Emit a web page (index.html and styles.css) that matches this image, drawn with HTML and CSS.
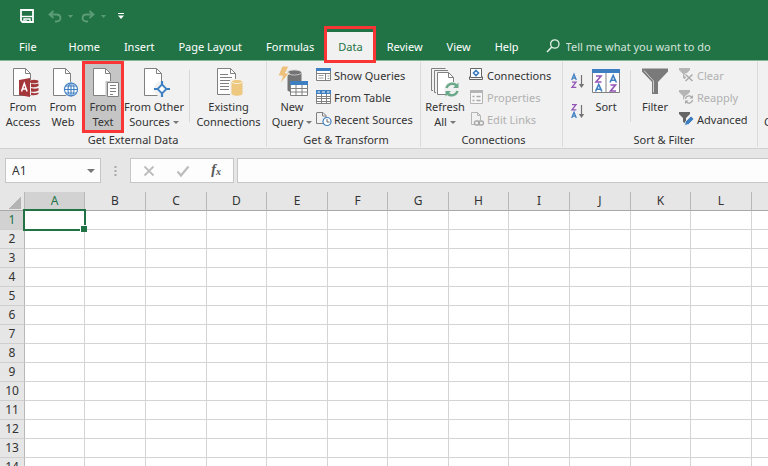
FILE: index.html
```html
<!DOCTYPE html>
<html lang="en">
<head>
  <meta charset="UTF-8">
  <title>Excel - Data</title>
  <link rel="stylesheet" href="styles.css">
</head>
<body>
  <header class="titlebar">
    <button class="quick save" aria-label="Save">
      <svg width="14" height="14" viewBox="0 0 14 14"><path d="M1 1h12v12H2.500L1 11.500z" fill="none" stroke="#fff" stroke-width="1.800"/><path d="M1 7.500h12" stroke="#fff" stroke-width="1.400"/><path d="M4 13V10h6v3M6 11v2" fill="none" stroke="#fff" stroke-width="1.400"/></svg>
    </button>
    <button class="quick undo" aria-label="Undo" disabled>
      <svg width="14" height="13" viewBox="0 0 14 13"><path d="M5.500 1L1.500 4.500l4 3.500M2 4.500h6.500c5 0 5.500 7 0 7H7" fill="none" stroke="#5c9c76" stroke-width="1.800"/></svg>
      <svg class="caret" width="5" height="3" viewBox="0 0 5 3"><path d="M0 0h5L2.500 3z" fill="#5c9c76"/></svg>
    </button>
    <button class="quick redo" aria-label="Redo" disabled>
      <svg width="14" height="13" viewBox="0 0 14 13"><path d="M8.500 1l4 3.500-4 3.500M12 4.500H5.500c-5 0-5.500 7 0 7H7" fill="none" stroke="#5c9c76" stroke-width="1.800"/></svg>
      <svg class="caret" width="5" height="3" viewBox="0 0 5 3"><path d="M0 0h5L2.500 3z" fill="#5c9c76"/></svg>
    </button>
    <button class="quick" aria-label="Customize Quick Access Toolbar">
      <svg width="6" height="6" viewBox="0 0 6 6"><path d="M0 0h6v1H0zM0 2.500h6L3 6z" fill="#fff"/></svg>
    </button>
  </header>

  <nav class="tabs">
    <button class="tab file">File</button>
    <button class="tab">Home</button>
    <button class="tab">Insert</button>
    <button class="tab">Page Layout</button>
    <button class="tab">Formulas</button>
    <button class="tab active">Data</button>
    <button class="tab">Review</button>
    <button class="tab">View</button>
    <button class="tab">Help</button>
    <label class="tell-me">
      <svg width="14" height="14" viewBox="0 0 14 14"><circle cx="8.800" cy="5" r="4.200" fill="none" stroke="#e3efe7" stroke-width="1.300"/><path d="M5.800 8L1 13" stroke="#e3efe7" stroke-width="1.600"/></svg>
      <input type="text" placeholder="Tell me what you want to do">
    </label>
  </nav>

  <main class="ribbon">
    <section class="group external">
      <div class="tools">
        <button class="big">
          <svg width="32" height="30" viewBox="0 0 32 30"><path d="M6.500.500h12l5 5v22h-17z" fill="#fff" stroke="#808080"/><path d="M18.500.500v5h5" fill="none" stroke="#808080"/><path d="M21 12h9v15h-9z" fill="#f1f1f1"/><g fill="#a4373a"><path d="M12 12l11-2v19l-11-2z"/><ellipse cx="27" cy="13.500" rx="4.500" ry="1.800"/><path d="M24 15.500q4 1.500 7.500 0v2.500q-3.500 2-7.500 1zM24 20q4 1.500 7.500 0v2.500q-3.500 2-7.500 1zM24 24.500q4 1.500 7.500 0v1.500q-3.500 2-7.500 1z"/></g><path d="M14.500 23.500l2.800-8 2.800 8M15.500 21h3.600" fill="none" stroke="#fff" stroke-width="1.500"/></svg>
          <span>From<br>Access</span>
        </button>
        <button class="big">
          <svg width="32" height="30" viewBox="0 0 32 30"><path d="M6.500.500h12l5 5v22h-17z" fill="#fff" stroke="#808080"/><path d="M18.500.500v5h5" fill="none" stroke="#808080"/><circle cx="24" cy="21.500" r="7.800" fill="#f1f1f1"/><g fill="#fff" stroke="#3e7fc1" stroke-width="1.100"><circle cx="24" cy="21.500" r="6.500"/><ellipse cx="24" cy="21.500" rx="3" ry="6.500"/><path d="M24 15v13M17.500 21.500h13M18.500 18h11M18.500 25h11"/></g></svg>
          <span>From<br>Web</span>
        </button>
        <button class="big marked">
          <svg width="32" height="30" viewBox="0 0 32 30"><path d="M6.500.500h12l5 5v22h-17z" fill="#fff" stroke="#808080"/><path d="M18.500.500v5h5" fill="none" stroke="#808080"/><path d="M18.500 13h12v16h-12z" fill="#c5c5c5"/><path d="M20.500 14.500h11v14h-11z" fill="#fff" stroke="#808080"/><path d="M23 17.500h6M23 20.500h6M23 23.500h6M23 26.500h3" stroke="#808080"/></svg>
          <span>From<br>Text</span>
        </button>
        <button class="big other">
          <svg width="32" height="30" viewBox="0 0 32 30"><path d="M6.500.500h12l5 5v22h-17z" fill="#fff" stroke="#808080"/><path d="M18.500.500v5h5" fill="none" stroke="#808080"/><circle cx="24" cy="21" r="8" fill="#f1f1f1"/><path d="M24 16.500l4.500 4.500-4.500 4.500-4.500-4.500z" fill="#fff" stroke="#3e7fc1" stroke-width="1.800"/><path d="M24 13v3.500M24 25.500V29M16 21h3.500M28.500 21H32" stroke="#3e7fc1" stroke-width="2.200"/></svg>
          <span>From Other<br>Sources <i class="arrow"></i></span>
        </button>
        <div class="divider"></div>
        <button class="big existing">
          <svg width="32" height="30" viewBox="0 0 32 30"><path d="M4.500.500h13l5 5v21h-18z" fill="#fff" stroke="#808080"/><path d="M17.500.500v5h5" fill="none" stroke="#808080"/><path d="M7 6.500h8M7 9.500h12M7 12.500h11M7 15.500h9M7 18.500h9M7 21.500h9" stroke="#808080"/><path d="M17 11h13v16H17z" fill="#f1f1f1"/><path d="M18.500 13.500v12c0 3 11 3 11 0v-12z" fill="#edc87e"/><ellipse cx="24" cy="13.500" rx="5.500" ry="2" fill="#edc87e" stroke="#fff" stroke-width=".7"/></svg>
          <span>Existing<br>Connections</span>
        </button>
      </div>
      <h2>Get External Data</h2>
    </section>

    <section class="group transform">
      <div class="tools">
        <button class="big">
          <svg width="32" height="30" viewBox="0 0 32 30"><path d="M11.500 5v17c0 3 14 3 14 0V5z" fill="#737373"/><ellipse cx="18.500" cy="4.500" rx="7" ry="2.500" fill="#737373" stroke="#d8d8d8" stroke-width=".8"/><path d="M6-2h7L9.500 5h4L4 16l2.500-8H2z" fill="#edc07b" stroke="#f1f1f1"/><path d="M14.500 14.500h17v13h-17z" fill="#fff" stroke="#808080"/><path d="M14 13h18v4H14z" fill="#3e7fc1"/><path d="M15 20.500h16M15 24h16M20 17v10M26 17v10" stroke="#808080"/></svg>
          <span>New<br>Query <i class="arrow"></i></span>
        </button>
        <div class="list">
          <button class="small">
            <svg width="16" height="16" viewBox="0 0 16 16"><path d="M.500 2.500h14v11H.500z" fill="#fff" stroke="#808080"/><path d="M0 1h15v3H0z" fill="#3e7fc1"/><path d="M1 6.500h14M9.500 7v6" stroke="#808080"/><path d="M2.500 8.500h5M2.500 11h5M11.500 9h2M11.500 11.500h2" stroke="#a0a0a0"/></svg>
            Show Queries
          </button>
          <button class="small">
            <svg width="16" height="16" viewBox="0 0 16 16"><path d="M.500 1.500h14v13H.500z" fill="#fff" stroke="#808080"/><path d="M0 1h15v4H0z" fill="#3e7fc1"/><path d="M1.500 3h2.500M6 3h3M11 3h2.500" stroke="#fff"/><path d="M1 7.500h13M1 9.500h13M1 12.500h13M5.500 5v9M10.500 5v9" stroke="#808080"/></svg>
            From Table
          </button>
          <button class="small">
            <svg width="16" height="16" viewBox="0 0 16 16"><path d="M1 1.500h6l3 3V8M7 12.500H.500v-11M6.500 1.500v3.500H10" fill="none" stroke="#808080"/><circle cx="11" cy="10.500" r="4" fill="#fff" stroke="#3e7fc1" stroke-width="1.200"/><path d="M11 8v3h2.500" fill="none" stroke="#666"/></svg>
            Recent Sources
          </button>
        </div>
      </div>
      <h2>Get &amp; Transform</h2>
    </section>

    <section class="group connections">
      <div class="tools">
        <button class="big">
          <svg width="32" height="30" viewBox="0 0 32 30"><path d="M4 22.500H2.500V.500h14M7 24.500H5.500v-22H19" fill="none" stroke="#808080"/><path d="M8.500 4.500h11l5 5v17h-16z" fill="#fff" stroke="#808080"/><path d="M19.500 4.500v5h5" fill="none" stroke="#808080"/><circle cx="23" cy="21.500" r="7.800" fill="#f1f1f1"/><path d="M17.500 20a6 6 0 0 1 10-2.500M28.500 23a6 6 0 0 1-10 2.500" fill="none" stroke="#6aa98a" stroke-width="2.500"/><path d="M24 20h5.500v-5.500zM22 23h-5.500v5.500z" fill="#6aa98a"/></svg>
          <span>Refresh<br>All <i class="arrow"></i></span>
        </button>
        <div class="list">
          <button class="small">
            <svg width="16" height="16" viewBox="0 0 16 16"><path d="M.500 12.500v-3M.500 12.500h13M13.500 12.500v-3M1.500 10.500v-9h11v9z" fill="#fff" stroke="#666"/><path d="M7 3.500L9.500 6 7 8.500 4.500 6z" fill="#fff" stroke="#3e7fc1" stroke-width="1.600"/></svg>
            Connections
          </button>
          <button class="small" disabled>
            <svg width="16" height="16" viewBox="0 0 16 16"><path d="M1.500 2.500h12v12h-12z" fill="#f7f7f7" stroke="#b5b5b5"/><path d="M1 1h13v3H1z" fill="#b5b5b5"/><path d="M3.500 7.500h2M7.500 7.500h4M3.500 11.500h2M7.500 11.500h4" stroke="#a8a8a8" stroke-width="1.500"/></svg>
            Properties
          </button>
          <button class="small" disabled>
            <svg width="16" height="16" viewBox="0 0 16 16"><path d="M6 13.500H2.500v-12h6l3 3V9M8.500 1.500v3h3" fill="none" stroke="#b5b5b5"/><rect x="5.500" y="10" width="5" height="4" rx="2" fill="none" stroke="#a8a8a8" stroke-width="1.300"/><rect x="9.500" y="10" width="5" height="4" rx="2" fill="none" stroke="#a8a8a8" stroke-width="1.300"/></svg>
            Edit Links
          </button>
        </div>
      </div>
      <h2>Connections</h2>
    </section>

    <section class="group sorting">
      <div class="tools">
        <div class="sort-pair">
          <button class="order" aria-label="Sort A to Z">
            <svg width="14" height="16" viewBox="0 0 14 16"><path d="M.700 7L3 1.300 5.300 7M1.500 5.200h3" fill="none" stroke="#3e7fc1" stroke-width="1.300"/><path d="M1 9.200h4L1 14.400h4.300" fill="none" stroke="#9254b5" stroke-width="1.300"/><path d="M10.500 2v11" stroke="#737373" stroke-width="1.200"/><path d="M7.800 11h5.400l-2.700 4z" fill="#737373"/></svg>
          </button>
          <button class="order" aria-label="Sort Z to A">
            <svg width="14" height="16" viewBox="0 0 14 16"><path d="M1 1.600h4L1 6.800h4.300" fill="none" stroke="#9254b5" stroke-width="1.300"/><path d="M.700 15L3 9.300 5.300 15M1.500 13.200h3" fill="none" stroke="#3e7fc1" stroke-width="1.300"/><path d="M10.500 2v11" stroke="#737373" stroke-width="1.200"/><path d="M7.800 11h5.400l-2.700 4z" fill="#737373"/></svg>
          </button>
        </div>
        <button class="big">
          <svg width="32" height="30" viewBox="0 0 32 30"><path d="M2.500 2.500h27v22h-27zM16 3v21" fill="#fff" stroke="#808080"/><path d="M2 1h28v4H2z" fill="#3e7fc1"/><path d="M6 8h5l-5 6h5.500M20.500 17h5l-5 6H26" fill="none" stroke="#9254b5" stroke-width="1.600"/><path d="M5.500 23.500l3.200-7 3.200 7M6.500 21.300h4.500M20 14.500l3.200-7 3.200 7M21 12.300h4.500" fill="none" stroke="#3e7fc1" stroke-width="1.600"/></svg>
          <span>Sort</span>
        </button>
        <div class="divider"></div>
        <button class="big">
          <svg width="32" height="30" viewBox="0 0 32 30"><path d="M3 .5h26v3L19 14v12h-6V14L3 3.500z" fill="#7a7a7a"/><path d="M5 2.500L14.500 13v11.500" fill="none" stroke="#d0d0d0"/></svg>
          <span>Filter</span>
        </button>
        <div class="list">
          <button class="small" disabled>
            <svg width="16" height="16" viewBox="0 0 16 16"><path d="M0 1h11v2L7 7v6L4 11V7L0 3z" fill="#b5b5b5"/><path d="M6 7l7.500 7M13.500 7L6 14" stroke="#f1f1f1" stroke-width="3.200"/><path d="M6.500 7.500l7 6.500M13.500 7.500l-7 6.500" stroke="#a8a8a8" stroke-width="1.400"/></svg>
            Clear
          </button>
          <button class="small" disabled>
            <svg width="16" height="16" viewBox="0 0 16 16"><path d="M0 1h11v2L7 7v5L4 10V7L0 3z" fill="#b5b5b5"/><circle cx="10" cy="10.500" r="5" fill="#f1f1f1"/><path d="M6.500 10a3.500 3.500 0 0 1 6-2M13.500 11a3.500 3.500 0 0 1-6 2" fill="none" stroke="#a8a8a8" stroke-width="1.400"/><path d="M10.500 9.500H14V6zM9.500 11.500H6V15z" fill="#a8a8a8"/></svg>
            Reapply
          </button>
          <button class="small">
            <svg width="16" height="16" viewBox="0 0 16 16"><path d="M0 1h11v2L7 7v6L4 11V7L0 3z" fill="#666"/><path d="M5.500 14.500l1-4L12 5l3 3-5.500 5.500z" fill="#3e7fc1" stroke="#f1f1f1" stroke-width=".8"/></svg>
            Advanced
          </button>
        </div>
      </div>
      <h2>Sort &amp; Filter</h2>
    </section>

    <section class="group columns">
      <div class="tools">
        <button class="big"><span>Columns</span></button>
      </div>
    </section>
  </main>

  <div class="formula-bar">
    <div class="name-box">
      <input type="text" value="A1" aria-label="Name Box">
      <button aria-label="Names"><i class="arrow"></i></button>
    </div>
    <svg class="grip" width="3" height="12" viewBox="0 0 3 12"><path d="M.500 1h2v2h-2zM.500 5h2v2h-2zM.500 9h2v2h-2z" fill="#a8a8a8"/></svg>
    <div class="entry">
      <button aria-label="Cancel"><svg width="12" height="12" viewBox="0 0 12 12"><path d="M1.500 1.500l9 9M10.500 1.500l-9 9" stroke="#bdbdbd" stroke-width="1.800"/></svg></button>
      <button aria-label="Enter"><svg width="12" height="12" viewBox="0 0 12 12"><path d="M.500 6.500l3.500 4 7.500-9" fill="none" stroke="#bdbdbd" stroke-width="2.200"/></svg></button>
      <button class="fx" aria-label="Insert Function">f<sub>x</sub></button>
    </div>
    <input class="formula" type="text" aria-label="Formula">
  </div>

  <div class="sheet">
    <table>
      <colgroup>
        <col class="numbers"><col><col class="wide"><col class="wide"><col><col class="wide"><col><col class="wide"><col><col class="wide"><col class="wide"><col><col class="wide"><col class="rest">
      </colgroup>
      <thead>
        <tr><th class="corner"></th><th class="current">A</th><th>B</th><th>C</th><th>D</th><th>E</th><th>F</th><th>G</th><th>H</th><th>I</th><th>J</th><th>K</th><th>L</th><th></th></tr>
      </thead>
      <tbody>
        <tr><th class="current">1</th><td class="selected"></td><td></td><td></td><td></td><td></td><td></td><td></td><td></td><td></td><td></td><td></td><td></td><td></td></tr>
        <tr><th>2</th><td></td><td></td><td></td><td></td><td></td><td></td><td></td><td></td><td></td><td></td><td></td><td></td><td></td></tr>
        <tr><th>3</th><td></td><td></td><td></td><td></td><td></td><td></td><td></td><td></td><td></td><td></td><td></td><td></td><td></td></tr>
        <tr><th>4</th><td></td><td></td><td></td><td></td><td></td><td></td><td></td><td></td><td></td><td></td><td></td><td></td><td></td></tr>
        <tr><th>5</th><td></td><td></td><td></td><td></td><td></td><td></td><td></td><td></td><td></td><td></td><td></td><td></td><td></td></tr>
        <tr><th>6</th><td></td><td></td><td></td><td></td><td></td><td></td><td></td><td></td><td></td><td></td><td></td><td></td><td></td></tr>
        <tr><th>7</th><td></td><td></td><td></td><td></td><td></td><td></td><td></td><td></td><td></td><td></td><td></td><td></td><td></td></tr>
        <tr><th>8</th><td></td><td></td><td></td><td></td><td></td><td></td><td></td><td></td><td></td><td></td><td></td><td></td><td></td></tr>
        <tr><th>9</th><td></td><td></td><td></td><td></td><td></td><td></td><td></td><td></td><td></td><td></td><td></td><td></td><td></td></tr>
        <tr><th>10</th><td></td><td></td><td></td><td></td><td></td><td></td><td></td><td></td><td></td><td></td><td></td><td></td><td></td></tr>
        <tr><th>11</th><td></td><td></td><td></td><td></td><td></td><td></td><td></td><td></td><td></td><td></td><td></td><td></td><td></td></tr>
        <tr><th>12</th><td></td><td></td><td></td><td></td><td></td><td></td><td></td><td></td><td></td><td></td><td></td><td></td><td></td></tr>
        <tr><th>13</th><td></td><td></td><td></td><td></td><td></td><td></td><td></td><td></td><td></td><td></td><td></td><td></td><td></td></tr>
        <tr><th>14</th><td></td><td></td><td></td><td></td><td></td><td></td><td></td><td></td><td></td><td></td><td></td><td></td><td></td></tr>
      </tbody>
    </table>
  </div>
</body>
</html>
```
FILE: styles.css
```css
* {
  box-sizing: border-box;
}
body {
  margin: 0;
  height: 100vh;
  overflow: hidden;
  display: flex;
  flex-direction: column;
  background-color: #e6e6e6;
  color: #333;
  font-family: "Noto Sans", "Open Sans", sans-serif;
  font-size: 11px;
  line-height: 15px;
}
button, input {
  margin: 0;
  padding: 0;
  border: none;
  background: none;
  color: inherit;
  font: inherit;
}
button {
  white-space: nowrap;
}
svg {
  display: block;
  flex: none;
  overflow: visible;
}

/* title bar */
.titlebar {
  flex: none;
  display: flex;
  align-items: center;
  height: 32px;
  padding-left: 20px;
  background-color: #217346;
}
.quick {
  display: flex;
  align-items: center;
}
.save {
  margin-right: 14px;
}
.undo, .redo {
  gap: 6px;
  margin-right: 8px;
}
.redo {
  margin-right: 12px;
}

/* tabs */
.tabs {
  flex: none;
  display: flex;
  height: 29px;
  background-color: #217346;
  border-bottom: 1px solid #86b598;
  color: #fff;
}
.tab {
  padding: 0 12px;
}
.file {
  padding: 0 20px 0 19px;
}
.active {
  position: relative;
  margin: 0 2px 0 1px;
  padding: 0 10px 0 11px;
  background-color: #f1f1f1;
  color: #217346;
}
.active::after {
  content: "";
  position: absolute;
  inset: -6px -3px -3px;
  border: 3px solid #f93535;
}
.tell-me {
  flex: 1;
  display: flex;
  align-items: center;
  gap: 6px;
  padding-left: 15px;
}
.tell-me input {
  flex: 1;
  min-width: 0;
}
.tell-me input::placeholder {
  color: #d3e3da;
  opacity: 1;
}

/* ribbon */
.ribbon {
  flex: none;
  display: flex;
  overflow: hidden;
  padding: 1px 0;
  background-color: #f1f1f1;
  border-bottom: 1px solid #d0d0d0;
}
.group {
  flex: none;
  display: flex;
  flex-direction: column;
  border-right: 1px solid #dadada;
}
.tools {
  display: flex;
  height: 70px;
}
.group h2 {
  margin: 0;
  font-size: 11px;
  font-weight: normal;
  text-align: center;
}
.external {
  width: 267px;
  padding: 0 3px;
}
.transform {
  width: 154px;
  padding-left: 5px;
}
.connections {
  width: 142px;
  padding-left: 4px;
}
.sorting {
  width: 195px;
  padding-left: 8px;
}
.big {
  display: flex;
  flex-direction: column;
  align-items: center;
  gap: 1px;
  width: 40px;
  padding-top: 6px;
}
.other {
  width: 62px;
}
.existing {
  flex: 1;
}
.marked {
  background-color: #c5c5c5;
  outline: 3px solid #f93535;
  outline-offset: -2px;
}
.divider {
  width: 1px;
  margin: 8px 4px 10px;
  background-color: #d8d8d8;
}
.arrow {
  display: inline-block;
  border: 3px solid transparent;
  border-top-color: #777;
  border-bottom: none;
  vertical-align: 2px;
}
.list {
  display: flex;
  flex-direction: column;
  padding: 2px 0 0 4px;
}
.small {
  display: flex;
  align-items: center;
  gap: 2px;
  height: 22px;
}
.small:disabled {
  color: #b0b0b0;
}
.sort-pair {
  display: flex;
  flex-direction: column;
  gap: 14px;
  padding: 11px 1px 0 0;
}
.columns {
  padding-left: 6px;
}
.columns .big {
  justify-content: flex-end;
  width: auto;
  padding-bottom: 3px;
}

/* formula bar */
.formula-bar {
  flex: none;
  display: flex;
  align-items: center;
  height: 43px;
  padding: 9px 0 9px 5px;
}
.name-box, .entry, .formula {
  height: 25px;
  background-color: #fdfdfd;
  border: 1px solid #c6c6c6;
}
.name-box {
  display: flex;
  width: 96px;
  margin-right: 13px;
  font-size: 12px;
}
.name-box input {
  flex: 1;
  min-width: 0;
  padding-left: 6px;
}
.name-box button {
  width: 18px;
}
.name-box .arrow {
  border-width: 4px 4px 0;
}
.entry {
  display: flex;
  align-items: center;
  justify-content: space-between;
  width: 104px;
  margin: 0 3px 0 13px;
  padding: 0 12px;
}
.fx {
  font-family: "Liberation Serif", serif;
  font-size: 14px;
  font-style: italic;
  font-weight: bold;
  color: #555;
}
.fx sub {
  font-size: 10px;
  vertical-align: -1px;
}
.formula {
  flex: 1;
  min-width: 0;
  padding: 0 6px;
  border-right: none;
}

/* sheet */
.sheet {
  flex: 1;
  min-height: 0;
  overflow: hidden;
}
table {
  width: 100%;
  table-layout: fixed;
  border-collapse: separate;
  border-spacing: 0;
}
col {
  width: 60px;
}
.wide {
  width: 61px;
}
.numbers {
  width: 25px;
}
.rest {
  width: auto;
}
th, td {
  height: 19px;
  padding: 0;
  border-right: 1px solid #d4d4d4;
  border-bottom: 1px solid #d4d4d4;
}
td {
  background-color: #fff;
}
td:last-child, th:last-child {
  border-right: none;
}
th {
  font-size: 12px;
  font-weight: normal;
  line-height: 18px;
  border-right-color: #b8b8b8;
  background-color: #e6e6e6;
}
thead th {
  border-bottom-color: #a8a8a8;
}
tbody th {
  border-bottom-color: #cfcfcf;
}
th.current {
  background-color: #d2d2d2;
  color: #217346;
}
.corner {
  background: linear-gradient(135deg, transparent 50%, #b4b4b4 50%) 9px 5px / 12px 12px no-repeat;
}
.selected {
  position: relative;
}
.selected::before {
  content: "";
  position: absolute;
  inset: -2px;
  border: 2px solid #217346;
}
.selected::after {
  content: "";
  position: absolute;
  right: -3px;
  bottom: -3px;
  width: 6px;
  height: 6px;
  background-color: #217346;
  border: 1px solid #fff;
  border-right: none;
  border-bottom: none;
}
```
